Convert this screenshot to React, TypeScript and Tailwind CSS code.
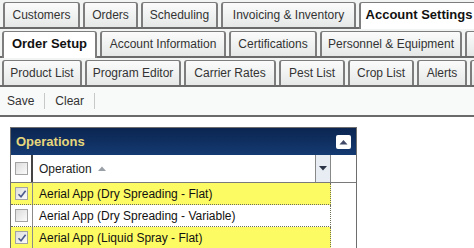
import React from 'react'

type Tab = { label: string; w: number; active?: boolean }

const ROW1: Tab[] = [
  { label: 'Customers', w: 77 },
  { label: 'Orders', w: 55 },
  { label: 'Scheduling', w: 77 },
  { label: 'Invoicing & Inventory', w: 135 },
  { label: 'Account Settings', w: 120, active: true },
]

// last tab on rows 2/3 runs off the page, only its left edge shows
const ROW2: Tab[] = [
  { label: 'Order Setup', w: 95, active: true },
  { label: 'Account Information', w: 126 },
  { label: 'Certifications', w: 88 },
  { label: 'Personnel & Equipment', w: 142 },
  { label: '', w: 40 },
]

const ROW3: Tab[] = [
  { label: 'Product List', w: 80 },
  { label: 'Program Editor', w: 96 },
  { label: 'Carrier Rates', w: 92 },
  { label: 'Pest List', w: 66 },
  { label: 'Crop List', w: 66 },
  { label: 'Alerts', w: 50 },
  { label: '', w: 40 },
]

const OPERATIONS = [
  { name: 'Aerial App (Dry Spreading - Flat)', checked: true },
  { name: 'Aerial App (Dry Spreading - Variable)', checked: false },
  { name: 'Aerial App (Liquid Spray - Flat)', checked: true },
]

function TabRow({ tabs, pl }: { tabs: Tab[]; pl: string }) {
  return (
    <div className={`flex items-end h-[29px] gap-[3px] border-b-2 border-[#6a6a6a] bg-[#f2f3f3] ${pl}`}>
      {tabs.map((t, i) => (
        <div
          key={i}
          style={{ width: t.w }}
          className={`flex-shrink-0 flex items-center justify-center whitespace-nowrap overflow-hidden rounded-t-[3px] border-x-2 border-t border-[#7d7d7d] ${
            t.active
              ? 'h-[27px] bg-white font-bold text-[13px] text-[#111] -mb-[2px] pb-[2px]'
              : 'h-[25px] bg-gradient-to-b from-[#fbfbfb] to-[#e6e8e8] text-[12px] text-[#333]'
          }`}
        >
          {t.label}
        </div>
      ))}
    </div>
  )
}

function CheckBox({ checked }: { checked: boolean }) {
  return (
    <div className="w-[13px] h-[13px] border border-[#a3a3a3] bg-gradient-to-br from-[#dcdcdc] to-[#fbfbfb] flex items-center justify-center">
      {checked && (
        <svg width="10" height="10" viewBox="0 0 10 10">
          <path d="M1.5 5.2 L4 7.8 L8.6 1.8" fill="none" stroke="#4b5b8c" strokeWidth="1.6" />
        </svg>
      )}
    </div>
  )
}

export default function App() {
  return (
    <div className="w-[474px] h-[248px] overflow-hidden bg-white font-['Liberation_Sans',Arial,sans-serif] text-[12px] text-[#222]">
      <TabRow tabs={ROW1} pl="pl-[3px]" />
      <TabRow tabs={ROW2} pl="pl-[2px]" />
      <TabRow tabs={ROW3} pl="pl-[2px]" />

      {/* toolbar */}
      <div className="flex items-center h-[30px] px-[7px] bg-[#f8f9f9] border-b-2 border-[#6a6a6a] text-[#333]">
        <span>Save</span>
        <span className="w-px h-[16px] bg-[#c8c8c8] mx-[10px]" />
        <span>Clear</span>
        <span className="w-px h-[16px] bg-[#c8c8c8] mx-[10px]" />
      </div>

      {/* operations panel */}
      <div className="ml-[10px] mt-[10px] w-[347px] border border-[#6e6e6e] border-b-0">
        <div className="flex items-center justify-between h-[27px] px-[5px] bg-gradient-to-b from-[#0b2550] to-[#143a72]">
          <span className="font-bold text-[13px] text-[#e7d77c]">Operations</span>
          <div className="w-[15px] h-[14px] bg-white rounded-[2px] flex items-center justify-center">
            <svg width="9" height="6" viewBox="0 0 9 6">
              <path d="M0.5 5.5 L4.5 1 L8.5 5.5 Z" fill="#404a68" />
            </svg>
          </div>
        </div>

        {/* column header */}
        <div className="flex h-[28px] bg-white border-b border-[#7a7a7a]">
          <div className="w-[22px] flex items-center justify-center border-r-2 border-[#444]">
            <CheckBox checked={false} />
          </div>
          <div className="w-[282px] flex items-center pl-[6px]">
            <span>Operation</span>
            <svg className="ml-[6px]" width="8" height="5" viewBox="0 0 8 5">
              <path d="M0 5 L4 0.5 L8 5 Z" fill="#9aa0a8" />
            </svg>
          </div>
          <div className="w-[16px] flex items-center justify-center bg-[#e7edf3] border-x border-[#888]">
            <svg width="8" height="5" viewBox="0 0 8 5">
              <path d="M0 0 L8 0 L4 4.5 Z" fill="#2c3448" />
            </svg>
          </div>
          <div className="flex-1" />
        </div>

        {/* rows */}
        {OPERATIONS.map((op) => (
          <div key={op.name} className="flex h-[22px]">
            <div
              className={`w-[320px] flex border-b border-dotted border-r border-[#6d6d5a] ${
                op.checked ? 'bg-[#fdfb64]' : 'bg-white'
              }`}
            >
              <div className="w-[22px] flex items-center justify-center border-r border-[#8a8a8a]">
                <CheckBox checked={op.checked} />
              </div>
              <div className="flex items-center pl-[6px] text-[12px] text-[#111] whitespace-nowrap">{op.name}</div>
            </div>
            <div className="flex-1 bg-white" />
          </div>
        ))}
      </div>
    </div>
  )
}
